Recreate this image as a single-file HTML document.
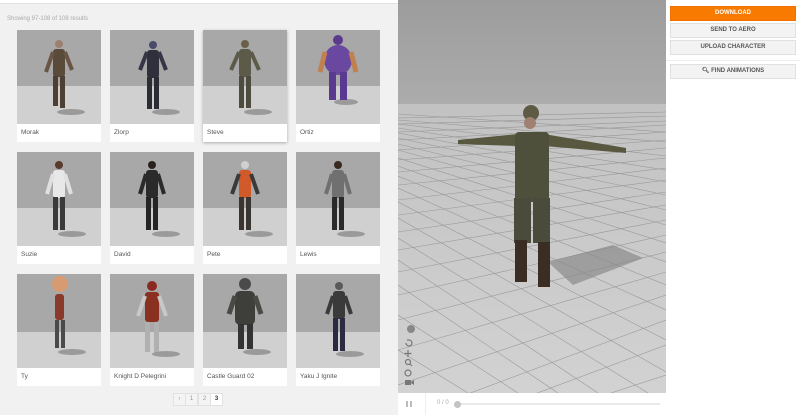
<!DOCTYPE html>
<html><head><meta charset="utf-8"><style>
*{margin:0;padding:0;box-sizing:border-box}
body{width:800px;height:415px;overflow:hidden;background:#fff;font-family:"Liberation Sans",sans-serif;position:relative}
#left{position:absolute;left:0;top:3px;width:398px;height:412px;background:#f1f1f1;border-top:1px solid #e2e2e2}
.res{position:absolute;left:7px;top:12px;font-size:6px;color:#aaa}
.card{position:absolute;width:84px;height:112px;background:#fff}
.card svg{display:block}
.card .nm{position:absolute;left:4px;top:99px;font-size:6.5px;color:#555}
.sel{box-shadow:0 1px 3px rgba(0,0,0,.3)}
.pg{position:absolute;top:393px;height:13px;width:13px;border:1px solid #e2e2e2;background:#f4f4f4;font-size:6px;color:#999;text-align:center;line-height:11px}
#vp{position:absolute;left:398px;top:0;width:268px;height:393px}
#bar{position:absolute;left:398px;top:393px;width:268px;height:22px;background:#fff}
#right{position:absolute;left:666px;top:0;width:134px;height:415px;background:#fff}
.btn{position:absolute;left:4px;width:126px;height:15px;border:1px solid #e0e0e0;background:#f3f3f3;font-size:6px;font-weight:bold;color:#555;text-align:center;line-height:13px}
</style></head><body>
<div id="left">
<div class="res">Showing 97-108 of 108 results</div>
</div>

<div class="card" style="left:17px;top:30px"><svg width="84" height="94"><rect width="84" height="56" fill="#a8a8a8"/><rect y="56" width="84" height="38" fill="#d0d0d0"/><ellipse cx="54" cy="82" rx="14" ry="3" fill="#9a9a9a"/><circle cx="42" cy="14" r="4" fill="#9b8070"/><rect x="36" y="19" width="12" height="28" rx="3" fill="#5a4a3a"/><path d="M36 22 L29 42 M48 22 L55 40" stroke="#6a5443" stroke-width="4"/><rect x="36" y="46" width="5" height="30" fill="#4d3f33"/><rect x="43" y="46" width="5" height="32" fill="#4d3f33"/></svg><div class="nm">Morak</div></div>
<div class="card" style="left:110px;top:30px"><svg width="84" height="94"><rect width="84" height="56" fill="#a8a8a8"/><rect y="56" width="84" height="38" fill="#d0d0d0"/><ellipse cx="56" cy="82" rx="14" ry="3" fill="#9a9a9a"/><circle cx="43" cy="15" r="4" fill="#4a4a6a"/><rect x="37" y="20" width="12" height="28" rx="3" fill="#30303c"/><path d="M37 22 L30 40 M49 22 L56 40" stroke="#353545" stroke-width="4"/><rect x="37" y="47" width="5" height="32" fill="#2c2c34"/><rect x="44" y="47" width="5" height="32" fill="#2c2c34"/></svg><div class="nm">Zlorp</div></div>
<div class="card sel" style="left:203px;top:30px"><svg width="84" height="94"><rect width="84" height="56" fill="#a8a8a8"/><rect y="56" width="84" height="38" fill="#d0d0d0"/><ellipse cx="55" cy="82" rx="14" ry="3" fill="#9a9a9a"/><circle cx="42" cy="14" r="4" fill="#6a5f48"/><rect x="36" y="19" width="12" height="28" rx="3" fill="#5c5a48"/><path d="M36 22 L28 40 M48 22 L56 40" stroke="#5c5a48" stroke-width="4"/><rect x="36" y="46" width="5" height="32" fill="#4e4c3e"/><rect x="43" y="46" width="5" height="32" fill="#4e4c3e"/></svg><div class="nm">Steve</div></div>
<div class="card" style="left:296px;top:30px"><svg width="84" height="94"><rect width="84" height="56" fill="#a8a8a8"/><rect y="56" width="84" height="38" fill="#d0d0d0"/><ellipse cx="50" cy="72" rx="12" ry="3" fill="#9a9a9a"/><circle cx="42" cy="10" r="5" fill="#5a3a8a"/><ellipse cx="42" cy="30" rx="14" ry="15" fill="#6a48a0"/><path d="M29 22 L24 42 M55 22 L60 42" stroke="#c08050" stroke-width="5"/><rect x="33" y="42" width="7" height="28" fill="#5a3a90"/><rect x="44" y="42" width="7" height="28" fill="#5a3a90"/></svg><div class="nm">Ortiz</div></div>

<div class="card" style="left:17px;top:152px"><svg width="84" height="94"><rect width="84" height="56" fill="#a8a8a8"/><rect y="56" width="84" height="38" fill="#d0d0d0"/><ellipse cx="55" cy="82" rx="14" ry="3" fill="#9a9a9a"/><circle cx="42" cy="13" r="4" fill="#5a3a2a"/><rect x="36" y="18" width="12" height="28" rx="3" fill="#e8e8e8"/><path d="M36 22 L30 42 M48 22 L54 42" stroke="#e0e0e0" stroke-width="4"/><rect x="36" y="45" width="5" height="33" fill="#3a3a3a"/><rect x="43" y="45" width="5" height="33" fill="#3a3a3a"/></svg><div class="nm">Suzie</div></div>
<div class="card" style="left:110px;top:152px"><svg width="84" height="94"><rect width="84" height="56" fill="#a8a8a8"/><rect y="56" width="84" height="38" fill="#d0d0d0"/><ellipse cx="56" cy="82" rx="14" ry="3" fill="#9a9a9a"/><circle cx="42" cy="13" r="4" fill="#2a2020"/><rect x="36" y="18" width="12" height="28" rx="3" fill="#2a2a2a"/><path d="M36 22 L30 42 M48 22 L54 42" stroke="#2a2a2a" stroke-width="4"/><rect x="36" y="45" width="5" height="33" fill="#252525"/><rect x="43" y="45" width="5" height="33" fill="#252525"/></svg><div class="nm">David</div></div>
<div class="card" style="left:203px;top:152px"><svg width="84" height="94"><rect width="84" height="56" fill="#a8a8a8"/><rect y="56" width="84" height="38" fill="#d0d0d0"/><ellipse cx="56" cy="82" rx="14" ry="3" fill="#9a9a9a"/><circle cx="42" cy="13" r="4" fill="#d0d0d0"/><rect x="36" y="18" width="12" height="28" rx="3" fill="#d05a2a"/><path d="M36 22 L29 42 M48 22 L55 42" stroke="#3a3a3a" stroke-width="4"/><rect x="36" y="45" width="5" height="33" fill="#3a3530"/><rect x="43" y="45" width="5" height="33" fill="#3a3530"/></svg><div class="nm">Pete</div></div>
<div class="card" style="left:296px;top:152px"><svg width="84" height="94"><rect width="84" height="56" fill="#a8a8a8"/><rect y="56" width="84" height="38" fill="#d0d0d0"/><ellipse cx="55" cy="82" rx="14" ry="3" fill="#9a9a9a"/><circle cx="42" cy="13" r="4" fill="#3a2a20"/><rect x="36" y="18" width="12" height="28" rx="3" fill="#707070"/><path d="M36 22 L30 42 M48 22 L54 42" stroke="#707070" stroke-width="4"/><rect x="36" y="45" width="5" height="33" fill="#2a2a2a"/><rect x="43" y="45" width="5" height="33" fill="#2a2a2a"/></svg><div class="nm">Lewis</div></div>

<div class="card" style="left:17px;top:274px"><svg width="84" height="94"><rect width="84" height="58" fill="#a8a8a8"/><rect y="58" width="84" height="36" fill="#d0d0d0"/><ellipse cx="55" cy="78" rx="14" ry="3" fill="#9a9a9a"/><circle cx="43" cy="10" r="8" fill="#d89a70"/><rect x="38" y="20" width="9" height="26" rx="3" fill="#8a3a2a"/><rect x="38" y="46" width="4" height="28" fill="#4a4a4a"/><rect x="44" y="46" width="4" height="28" fill="#4a4a4a"/></svg><div class="nm">Ty</div></div>
<div class="card" style="left:110px;top:274px"><svg width="84" height="94"><rect width="84" height="58" fill="#a8a8a8"/><rect y="58" width="84" height="36" fill="#d0d0d0"/><ellipse cx="56" cy="80" rx="14" ry="3" fill="#9a9a9a"/><circle cx="42" cy="12" r="5" fill="#8a2a20"/><rect x="35" y="18" width="14" height="30" rx="3" fill="#8a3020"/><path d="M35 22 L28 42 M49 22 L56 42" stroke="#c8c8c8" stroke-width="4"/><rect x="35" y="48" width="5" height="30" fill="#b0b0b0"/><rect x="44" y="48" width="5" height="30" fill="#b0b0b0"/></svg><div class="nm">Knight D Pelegrini</div></div>
<div class="card" style="left:203px;top:274px"><svg width="84" height="94"><rect width="84" height="58" fill="#a8a8a8"/><rect y="58" width="84" height="36" fill="#d0d0d0"/><ellipse cx="54" cy="78" rx="14" ry="3" fill="#9a9a9a"/><circle cx="42" cy="10" r="6" fill="#4a4a4a"/><rect x="32" y="17" width="20" height="34" rx="5" fill="#3e3e3a"/><path d="M32 22 L26 40 M52 22 L58 40" stroke="#4a4a44" stroke-width="5"/><rect x="35" y="50" width="6" height="25" fill="#333"/><rect x="44" y="50" width="6" height="25" fill="#333"/></svg><div class="nm">Castle Guard 02</div></div>
<div class="card" style="left:296px;top:274px"><svg width="84" height="94"><rect width="84" height="58" fill="#a8a8a8"/><rect y="58" width="84" height="36" fill="#d0d0d0"/><ellipse cx="54" cy="80" rx="14" ry="3" fill="#9a9a9a"/><circle cx="43" cy="12" r="4" fill="#5a5a5a"/><rect x="37" y="17" width="12" height="28" rx="3" fill="#3a3a3a"/><path d="M37 22 L31 40 M49 22 L55 40" stroke="#3a3a3a" stroke-width="4"/><rect x="37" y="44" width="5" height="33" fill="#2a2a40"/><rect x="44" y="44" width="5" height="33" fill="#2a2a40"/></svg><div class="nm">Yaku J Ignite</div></div>

<div class="pg" style="left:173px">‹</div>
<div class="pg" style="left:185px">1</div>
<div class="pg" style="left:198px">2</div>
<div class="pg" style="left:210px;background:#fff;color:#333;font-weight:bold">3</div>

<div id="vp"><svg width="268" height="393">
<defs><linearGradient id="sky" x1="0" y1="0" x2="0" y2="1"><stop offset="0" stop-color="#9c9c9c"/><stop offset="1" stop-color="#acacac"/></linearGradient>
<linearGradient id="fl" x1="0" y1="0" x2="0" y2="1"><stop offset="0" stop-color="#c2c2c2"/><stop offset="1" stop-color="#d2d2d2"/></linearGradient></defs>
<rect width="268" height="104" fill="url(#sky)"/><rect y="104" width="268" height="289" fill="url(#fl)"/>
<g stroke="#8c8c8c" stroke-width="0.6" opacity="0.8">
<path d="M0 118 L268 112 M0 124 L268 116 M0 132 L268 121 M0 140 L268 125 M0 150 L268 132 M0 160 L268 140 M0 172 L268 148 M0 185 L268 158 M0 200 L268 168 M0 215 L268 180 M0 232 L268 192 M0 250 L268 205 M0 272 L268 220 M0 295 L268 235 M0 320 L268 252 M0 350 L268 272 M0 385 L268 295 M0 420 L268 320 M40 430 L268 345 M100 430 L268 375"/>
<path d="M0 114 L268 132 M0 120 L268 142 M0 124 L268 156 M0 128 L268 170 M0 133 L268 182 M0 138 L268 195 M0 144 L268 210 M0 150 L268 225 M0 158 L268 243 M0 166 L268 262 M0 176 L268 285 M0 188 L268 310 M0 202 L268 340 M0 218 L268 372 M0 238 L250 393 M0 260 L200 393 M0 285 L160 393 M0 315 L120 393 M0 350 L70 393"/>
</g>
<path d="M150 262 L215 245 L245 258 L175 285 Z" fill="#8a8a8a" opacity="0.7"/>
<circle cx="133" cy="113" r="8" fill="#5e5a44"/><circle cx="132" cy="123" r="6" fill="#a08070"/>
<path d="M60 140 L120 134 L146 134 L228 148 L228 153 L146 146 L120 146 L60 144Z" fill="#58573f"/>
<rect x="117" y="132" width="34" height="70" rx="4" fill="#4f503c"/>
<rect x="116" y="198" width="17" height="45" fill="#4a4b3a"/><rect x="135" y="198" width="17" height="45" fill="#4a4b3a"/>
<rect x="117" y="240" width="12" height="42" fill="#3a2e24"/><rect x="140" y="242" width="12" height="45" fill="#3a2e24"/>
<rect x="9" y="325" width="8" height="8" rx="4" fill="#888"/>
<g fill="none" stroke="#777" stroke-width="1.2"><path d="M8 343a3 3 0 1 0 3-3h-2"/><path d="M10 350v7M6.5 353.5h7"/><circle cx="10" cy="362" r="2.5"/><path d="M12 364l2 2"/><circle cx="10" cy="373" r="3"/></g>
<rect x="7" y="380" width="6" height="5" fill="#777"/><path d="M13 382l3-2v5l-3-2z" fill="#777"/>
</svg></div>
<div id="bar">
<div style="position:absolute;left:8px;top:8px;width:2px;height:6px;background:#bbb"></div><div style="position:absolute;left:12px;top:8px;width:2px;height:6px;background:#bbb"></div>
<div style="position:absolute;left:27px;top:0;width:1px;height:22px;background:#eee"></div>
<div style="position:absolute;left:39px;top:7px;font-size:6px;color:#aaa">0 / 0</div>
<div style="position:absolute;left:58px;top:10px;width:204px;height:2px;background:#eaeaea"></div>
<div style="position:absolute;left:56px;top:8px;width:7px;height:7px;border-radius:50%;background:#c4c4c4"></div>
</div>
<div id="right">
<div class="btn" style="top:6px;background:#f97a00;border-color:#f07000;color:#fff">DOWNLOAD</div>
<div class="btn" style="top:23px">SEND TO AERO</div>
<div class="btn" style="top:40px">UPLOAD CHARACTER</div>
<div style="position:absolute;left:0;top:60px;width:134px;height:1px;background:#eee"></div>
<div class="btn" style="top:64px">&#x1F50D;&#xFE0E; FIND ANIMATIONS</div>
</div>
</body></html>
